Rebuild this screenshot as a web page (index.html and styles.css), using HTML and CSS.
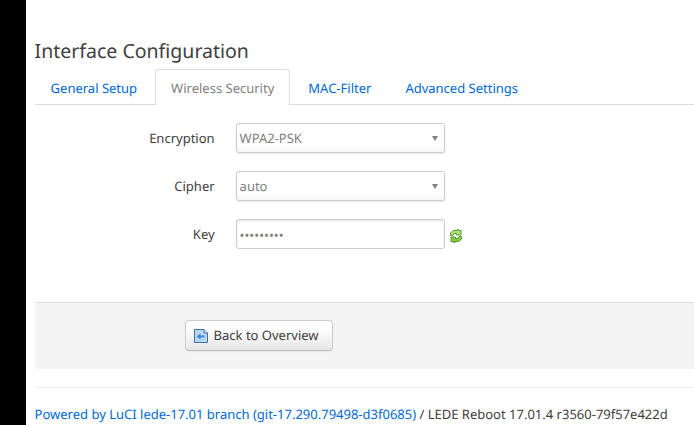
FILE: index.html
```html
<!DOCTYPE html>
<html lang="en">
<head>
    <meta charset="UTF-8">
    <title>Interface Configuration</title>
    <link rel="stylesheet" href="styles.css">
</head>
<body>
<div class="sidebar"></div>
<div class="main">
    <h2>Interface Configuration</h2>
    <ul class="tabs">
        <li><a href="#">General Setup</a></li>
        <li class="active"><a href="#">Wireless Security</a></li>
        <li><a href="#">MAC-Filter</a></li>
        <li><a href="#">Advanced Settings</a></li>
    </ul>
    <div class="form">
        <div class="row">
            <label>Encryption</label>
            <div class="field select">WPA2-PSK<span class="arrow"></span></div>
        </div>
        <div class="row">
            <label>Cipher</label>
            <div class="field select">auto<span class="arrow"></span></div>
        </div>
        <div class="row">
            <label>Key</label>
            <div class="field key">•••••••••</div>
            <svg class="reload" width="12" height="14" viewBox="0 0 12 14">
                <path d="M0.500 6.500V4L3 1.500H7V0.500H8.500V1.500L11 1.500V6H6.500V4.500H4L3 6.500Z" fill="#b4e07c" stroke="#4a9426" stroke-width="0.9"/>
                <path d="M11.500 7.500V10L9 12.500H5V13.500H3.500V12.500L1 12.500V8H5.500V9.500H8L9 7.500Z" fill="#86c846" stroke="#4a9426" stroke-width="0.9"/>
            </svg>
        </div>
    </div>
    <div class="actions">
        <a class="btn" href="#">
            <svg width="16" height="16" viewBox="0 0 16 16">
                <path d="M1.500 1.500H11L14.500 5V14.500H1.500Z" fill="#b9d6f5" stroke="#3d6ea8"/>
                <path d="M11 1.500V5H14.500" fill="#e6f0fb" stroke="#3d6ea8"/>
                <path d="M3.500 8.500L7.500 5.500V7.500H11.500V9.500H7.500V11.500Z" fill="#3f86dc"/>
            </svg>
            Back to Overview
        </a>
    </div>
    <footer>
        <a href="#">Powered by LuCI lede-17.01 branch (git-17.290.79498-d3f0685)</a> / LEDE Reboot 17.01.4 r3560-79f57e422d
    </footer>
</div>
</body>
</html>
```

FILE: styles.css
```css
html, body {
    height: 100%;
}
body {
    margin: 0;
    display: flex;
    overflow: hidden;
    font-family: "Noto Sans", sans-serif;
    font-size: 13px;
    color: #404040;
    background-color: #fff;
    text-rendering: geometricPrecision;
}
a {
    color: #0069d6;
    text-decoration: none;
}
.sidebar {
    width: 26px;
    flex: none;
    background-color: #000;
}
.main {
    flex: 1;
    min-width: 0;
    padding: 37px 0 0 8.6px;
}
h2 {
    margin: 0;
    height: 32px;
    font-size: 19.5px;
    font-weight: 400;
    line-height: 27px;
}
.tabs {
    display: flex;
    margin: 0;
    padding: 0;
    height: 35px;
    list-style: none;
    border-bottom: 1px solid #ddd;
}
.tabs li {
    margin-right: 2px;
}
.tabs li a {
    display: block;
    height: 34px;
    padding: 0 15px;
    line-height: 36px;
    border: 1px solid transparent;
    border-bottom: 0;
    border-radius: 4px 4px 0 0;
}
.tabs li.active a {
    height: 35px;
    color: #808080;
    background-color: #fff;
    border-color: #ddd;
}
.form {
    padding-top: 18px;
    height: 179px;
    box-sizing: border-box;
    margin-bottom: 18px;
}
.row {
    display: flex;
    align-items: center;
    height: 30px;
    margin-bottom: 18px;
}
.row label {
    width: 180px;
    text-align: right;
    margin-right: 21px;
}
.field {
    position: relative;
    box-sizing: border-box;
    width: 209px;
    height: 30px;
    padding: 0 3px;
    line-height: 29px;
    color: #808080;
    border: 1px solid #ccc;
    border-radius: 3px;
    box-shadow: 0 1px 2px rgba(0, 0, 0, 0.1);
}
.select {
    background-image: linear-gradient(#fff, #fff 70%, #f6f6f6);
}
.arrow {
    position: absolute;
    right: 6px;
    top: 12px;
    border-left: 3px solid transparent;
    border-right: 3px solid transparent;
    border-top: 5px solid #808080;
}
.key {
    line-height: 30px;
    box-shadow: inset 0 1px 2px rgba(0, 0, 0, 0.1);
}
.reload {
    margin: 3px 0 0 5px;
}
.actions {
    box-sizing: border-box;
    height: 67px;
    padding: 17px 0 0 150.5px;
    background-color: #f4f4f4;
    border-top: 1px solid #ddd;
}
.btn {
    display: inline-flex;
    align-items: center;
    gap: 5px;
    box-sizing: border-box;
    width: 148px;
    height: 31px;
    padding: 0 6.5px 2px;
    color: #404040;
    background-image: linear-gradient(#fff, #fff 25%, #e6e6e6);
    border: 1px solid #ccc;
    border-bottom-color: #bbb;
    border-radius: 4px;
    box-shadow: 0 1px 2px rgba(0, 0, 0, 0.05);
}
.btn svg {
    margin-top: 2px;
}
footer {
    margin-top: 18px;
    padding-top: 17px;
    border-top: 1px solid #eee;
    white-space: nowrap;
    line-height: 19px;
}
```
